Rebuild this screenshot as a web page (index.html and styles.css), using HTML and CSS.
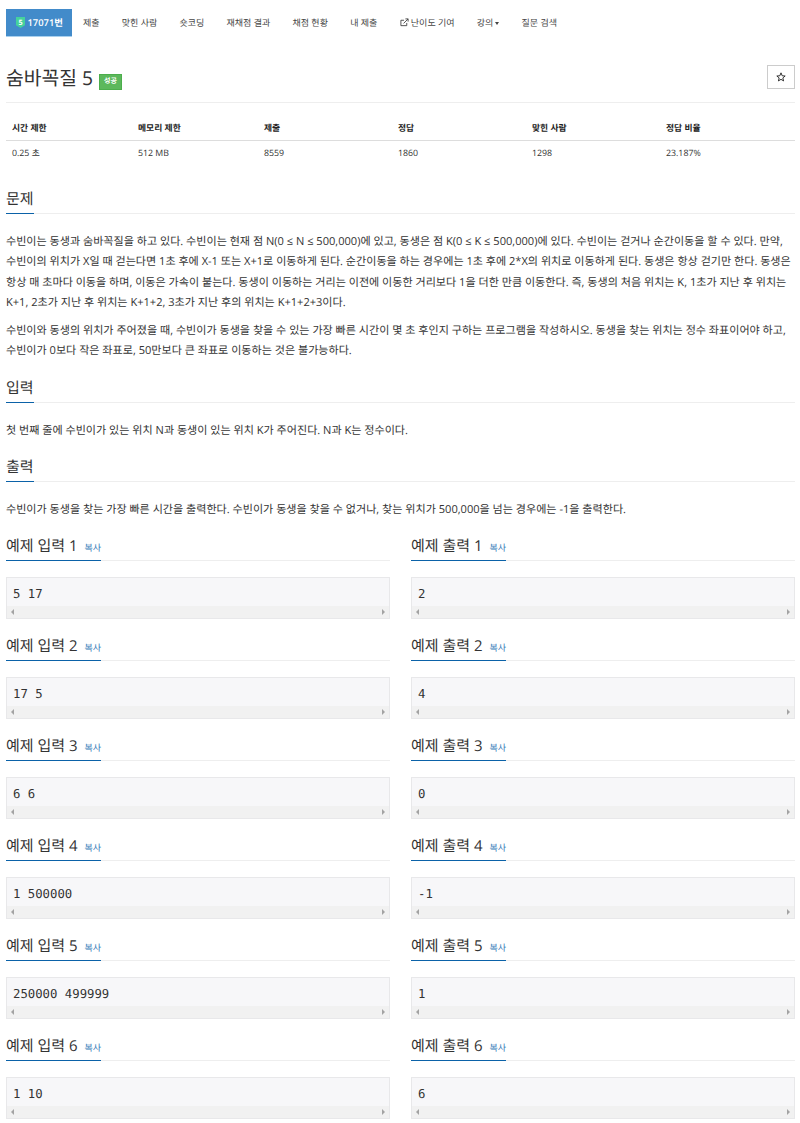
FILE: index.html
```html
<!DOCTYPE html>
<html lang="ko">
<head>
<meta charset="utf-8">
<title>숨바꼭질 5</title>
<link rel="stylesheet" href="styles.css">
</head>
<body>

<ul class="menu">
<li class="active"><a href="#"><svg class="shield" viewBox="0 0 10 12"><path d="M0 0H10V9L5 12L0 9Z" fill="#45d29c"/><text x="5" y="8.6" text-anchor="middle" class="shield-num">5</text></svg> 17071번</a></li>
<li><a href="#">제출</a></li>
<li><a href="#">맞힌 사람</a></li>
<li><a href="#">숏코딩</a></li>
<li><a href="#">재채점 결과</a></li>
<li><a href="#">채점 현황</a></li>
<li><a href="#">내 제출</a></li>
<li><a href="#"><svg class="ext" viewBox="0 0 10 10"><path d="M7.5 5.5V8.5H1V2.5H4.5M4 6L9 1M6 1H9V4" fill="none" stroke="#444" stroke-width="1"/></svg> 난이도 기여</a></li>
<li><a href="#">강의<span class="caret"></span></a></li>
<li><a href="#">질문 검색</a></li>
</ul>

<div class="page-header">
<h1>숨바꼭질 5 <span class="label">성공</span></h1>
<button class="star-btn"><svg viewBox="0 0 12 12"><path d="M6 1L7.4 4.5L11 4.8L8.2 7.1L9.1 10.7L6 8.8L2.9 10.7L3.8 7.1L1 4.8L4.6 4.5Z" fill="none" stroke="#222" stroke-width="1.1"/></svg></button>
</div>

<table class="info">
<thead>
<tr><th>시간 제한</th><th>메모리 제한</th><th>제출</th><th>정답</th><th>맞힌 사람</th><th>정답 비율</th></tr>
</thead>
<tbody>
<tr><td>0.25 초</td><td>512 MB</td><td>8559</td><td>1860</td><td>1298</td><td>23.187%</td></tr>
</tbody>
</table>

<div class="headline first"><h2>문제</h2></div>
<div class="text">
<p>수빈이는 동생과 숨바꼭질을 하고 있다. 수빈이는 현재 점 N(0 ≤ N ≤ 500,000)에 있고, 동생은 점 K(0 ≤ K ≤ 500,000)에 있다. 수빈이는 걷거나 순간이동을 할 수 있다. 만약, 수빈이의 위치가 X일 때 걷는다면 1초 후에 X-1 또는 X+1로 이동하게 된다. 순간이동을 하는 경우에는 1초 후에 2*X의 위치로 이동하게 된다. 동생은 항상 걷기만 한다. 동생은 항상 매 초마다 이동을 하며, 이동은 가속이 붙는다. 동생이 이동하는 거리는 이전에 이동한 거리보다 1을 더한 만큼 이동한다. 즉, 동생의 처음 위치는 K, 1초가 지난 후 위치는 K+1, 2초가 지난 후 위치는 K+1+2, 3초가 지난 후의 위치는 K+1+2+3이다.</p>
<p>수빈이와 동생의 위치가 주어졌을 때, 수빈이가 동생을 찾을 수 있는 가장 빠른 시간이 몇 초 후인지 구하는 프로그램을 작성하시오. 동생을 찾는 위치는 정수 좌표이어야 하고, 수빈이가 0보다 작은 좌표로, 50만보다 큰 좌표로 이동하는 것은 불가능하다.</p>
</div>

<div class="headline"><h2>입력</h2></div>
<div class="text">
<p>첫 번째 줄에 수빈이가 있는 위치 N과 동생이 있는 위치 K가 주어진다. N과 K는 정수이다.</p>
</div>

<div class="headline"><h2>출력</h2></div>
<div class="text">
<p>수빈이가 동생을 찾는 가장 빠른 시간을 출력한다. 수빈이가 동생을 찾을 수 없거나, 찾는 위치가 500,000을 넘는 경우에는 -1을 출력한다.</p>
</div>

<div class="samples">
<div class="sample"><div class="headline"><h2>예제 입력 1 <a class="copy" href="#">복사</a></h2></div><div class="pre"><pre>5 17</pre><div class="hbar"><span class="arrow-l"></span><span class="arrow-r"></span></div></div></div>
<div class="sample"><div class="headline"><h2>예제 출력 1 <a class="copy" href="#">복사</a></h2></div><div class="pre"><pre>2</pre><div class="hbar"><span class="arrow-l"></span><span class="arrow-r"></span></div></div></div>
<div class="sample"><div class="headline"><h2>예제 입력 2 <a class="copy" href="#">복사</a></h2></div><div class="pre"><pre>17 5</pre><div class="hbar"><span class="arrow-l"></span><span class="arrow-r"></span></div></div></div>
<div class="sample"><div class="headline"><h2>예제 출력 2 <a class="copy" href="#">복사</a></h2></div><div class="pre"><pre>4</pre><div class="hbar"><span class="arrow-l"></span><span class="arrow-r"></span></div></div></div>
<div class="sample"><div class="headline"><h2>예제 입력 3 <a class="copy" href="#">복사</a></h2></div><div class="pre"><pre>6 6</pre><div class="hbar"><span class="arrow-l"></span><span class="arrow-r"></span></div></div></div>
<div class="sample"><div class="headline"><h2>예제 출력 3 <a class="copy" href="#">복사</a></h2></div><div class="pre"><pre>0</pre><div class="hbar"><span class="arrow-l"></span><span class="arrow-r"></span></div></div></div>
<div class="sample"><div class="headline"><h2>예제 입력 4 <a class="copy" href="#">복사</a></h2></div><div class="pre"><pre>1 500000</pre><div class="hbar"><span class="arrow-l"></span><span class="arrow-r"></span></div></div></div>
<div class="sample"><div class="headline"><h2>예제 출력 4 <a class="copy" href="#">복사</a></h2></div><div class="pre"><pre>-1</pre><div class="hbar"><span class="arrow-l"></span><span class="arrow-r"></span></div></div></div>
<div class="sample"><div class="headline"><h2>예제 입력 5 <a class="copy" href="#">복사</a></h2></div><div class="pre"><pre>250000 499999</pre><div class="hbar"><span class="arrow-l"></span><span class="arrow-r"></span></div></div></div>
<div class="sample"><div class="headline"><h2>예제 출력 5 <a class="copy" href="#">복사</a></h2></div><div class="pre"><pre>1</pre><div class="hbar"><span class="arrow-l"></span><span class="arrow-r"></span></div></div></div>
<div class="sample"><div class="headline"><h2>예제 입력 6 <a class="copy" href="#">복사</a></h2></div><div class="pre"><pre>1 10</pre><div class="hbar"><span class="arrow-l"></span><span class="arrow-r"></span></div></div></div>
<div class="sample"><div class="headline"><h2>예제 출력 6 <a class="copy" href="#">복사</a></h2></div><div class="pre"><pre>6</pre><div class="hbar"><span class="arrow-l"></span><span class="arrow-r"></span></div></div></div>
</div>

</body>
</html>
```
FILE: styles.css
```css
html, body{
margin:0;
height:1123px;
overflow:hidden;
}

body{
padding:9px 5px 0 6px;
box-sizing:border-box;
background:#ffffff;
color:#333333;
font-family:"Open Sans","Noto Sans CJK KR",sans-serif;
font-size:11.07px;
line-height:20.3px;
text-rendering:geometricPrecision;
}

a{
color:inherit;
text-decoration:none;
}

.menu{
list-style-type:none;
margin:0;
padding:0;
display:flex;
height:28px;
}

.menu li a{
display:block;
padding:0 11.1px;
height:28px;
line-height:28px;
font-size:9px;
color:#444444;
white-space:nowrap;
}

.menu li.active a{
background:#428bca;
border-bottom:1px solid #a9d0ee;
box-sizing:border-box;
color:#ffffff;
font-weight:600;
font-size:9.4px;
padding:0 0 0 10px;
width:66px;
}

.shield{
width:9px;
height:11px;
vertical-align:-2px;
}

.shield-num{
font-size:8px;
font-weight:bold;
fill:#ffffff;
}

.ext{
width:9px;
height:9px;
vertical-align:-1px;
}

.caret{
display:inline-block;
margin-left:2px;
vertical-align:1px;
border-top:3px solid #444444;
border-left:2.5px solid transparent;
border-right:2.5px solid transparent;
}

.page-header{
display:flex;
justify-content:space-between;
align-items:flex-start;
margin-top:27px;
height:38px;
border-bottom:1px solid #eeeeee;
}

h1{
margin:0;
font-size:19.3px;
font-weight:400;
line-height:27px;
}

.label{
display:inline-block;
margin-left:1px;
background:#5cb85c;
border:1px solid #4cae4c;
color:#ffffff;
font-size:7px;
font-weight:bold;
line-height:14px;
padding:0 4px;
vertical-align:2px;
}

.star-btn{
width:28px;
height:24px;
margin:1px 0 0;
padding:0;
background:#ffffff;
border:1px solid #cccccc;
display:flex;
align-items:center;
justify-content:center;
}

.star-btn svg{
width:10px;
height:10px;
}

.info{
width:100%;
margin-top:14px;
border-collapse:collapse;
table-layout:fixed;
font-size:8.8px;
}

.info th{
text-align:left;
font-weight:bold;
color:#222222;
padding:0 6px;
height:23px;
border-bottom:1px solid #dddddd;
}

.info td{
padding:0 6px;
height:25px;
}

.info th:nth-child(1),.info th:nth-child(2){
width:114px;
}

.info th:nth-child(3){
width:122px;
}

.info th:nth-child(4),.info th:nth-child(5){
width:122px;
}

.headline{
border-bottom:1px solid #eeeeee;
height:26px;
margin-top:14px;
}

.headline.first{
margin-top:21px;
}

h2{
display:inline-block;
margin:0;
height:26px;
border-bottom:1px solid #0b62a8;
font-size:15px;
font-weight:400;
line-height:24px;
white-space:nowrap;
}

.copy{
font-size:9px;
color:#337ab7;
margin-left:3px;
}

.text{
margin-top:18px;
}

.text p{
margin:0 0 8px;
}

.samples{
display:grid;
grid-template-columns:384px 384px;
column-gap:21px;
margin-top:14px;
}

.sample{
height:100px;
}

.sample .headline{
margin-top:0;
}

.pre{
margin-top:16px;
height:40px;
background:#f7f7f9;
border:1px solid #e8e8ea;
}

pre{
margin:0;
height:28px;
padding:0 6px;
font-family:"DejaVu Sans Mono","Liberation Mono",monospace;
font-size:12.3px;
line-height:33px;
color:#333333;
}

.hbar{
height:12px;
background:#f1f1f1;
display:flex;
justify-content:space-between;
align-items:center;
padding:0 4px;
}

.arrow-l{
border-right:3px solid #a3a3a3;
border-top:3px solid transparent;
border-bottom:3px solid transparent;
}

.arrow-r{
border-left:3px solid #a3a3a3;
border-top:3px solid transparent;
border-bottom:3px solid transparent;
}
```
